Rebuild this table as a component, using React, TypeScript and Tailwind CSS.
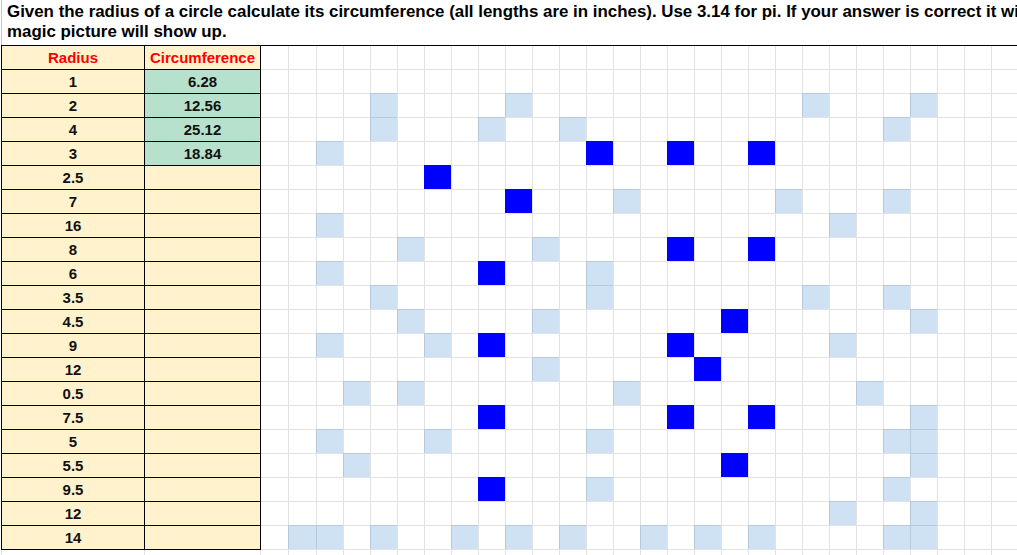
import React from "react";

const radii = ["1", "2", "4", "3", "2.5", "7", "16", "8", "6", "3.5", "4.5", "9", "12", "0.5", "7.5", "5", "5.5", "9.5", "12", "14"];
const circ = ["6.28", "12.56", "25.12", "18.84"];

const LIGHT: Record<number, number[]> = {
  2: [4, 9, 20, 24],
  3: [4, 8, 11, 23],
  4: [2],
  6: [13, 19, 23],
  7: [2, 21],
  8: [5, 10],
  9: [2, 12],
  10: [4, 12, 20, 23],
  11: [5, 10, 24],
  12: [2, 6, 21],
  13: [10],
  14: [3, 5, 13, 22],
  15: [24],
  16: [2, 6, 12, 23, 24],
  17: [3, 24],
  18: [12, 23],
  19: [21, 24],
  20: [1, 2, 4, 7, 9, 11, 14, 16, 18, 23, 24],
};

const DARK: Record<number, number[]> = {
  4: [12, 15, 18],
  5: [6],
  6: [9],
  8: [15, 18],
  9: [8],
  11: [17],
  12: [8, 15],
  13: [16],
  15: [8, 15, 18],
  17: [17],
  18: [8],
};

const COLS = Array.from({ length: 28 }, (_, i) => i);

function GridCells({ row }: { row: number }) {
  const light = LIGHT[row] || [];
  const dark = DARK[row] || [];
  return (
    <>
      {COLS.map((c) => {
        const w = c < 2 ? "w-[28px]" : "w-[27px]";
        let fill = "bg-white";
        if (dark.includes(c)) fill = "bg-[#0000ff] shadow-[-1px_-1px_0_#0000ff]";
        else if (light.includes(c)) fill = "bg-[#cfe2f3] shadow-[-1px_-1px_0_#b5c9db]";
        return <div key={c} className={`${w} h-[24px] shrink-0 border-r border-b border-[#e2e2e2] ${fill}`} />;
      })}
    </>
  );
}

export default function App() {
  return (
    <div
      className="w-[1017px] h-[555px] overflow-hidden bg-white text-black"
      style={{ fontFamily: '"Liberation Sans", Arial, sans-serif' }}
    >
      <div className="ml-[1px] h-[45px] border-l border-[#c8c8c8] pl-[5px] pt-[2px] font-bold text-[16.9px] leading-[20px] whitespace-nowrap overflow-hidden">
        <div>
          Given the radius of a circle calculate its circumference (all lengths are in inches). Use 3.14 for pi. If your answer is correct it will
        </div>
        <div>magic picture will show up.</div>
      </div>
      <div className="ml-[1px] border-t border-black w-[1100px]">
        <div className="flex h-[24px]">
          <div className="w-[144px] shrink-0 border-l border-r border-b border-black bg-[#fff2cc] text-center text-[15px] font-bold leading-[23px] text-[#ff0000]">
            Radius
          </div>
          <div className="w-[116px] shrink-0 border-r border-b border-black bg-[#fff2cc] text-center text-[15px] font-bold leading-[23px] text-[#ff0000]">
            Circumference
          </div>
          <GridCells row={0} />
        </div>
        {radii.map((r, i) => (
          <div key={i} className="flex h-[24px]">
            <div className="w-[144px] shrink-0 border-l border-r border-b border-black bg-[#fff2cc] text-center text-[15px] font-bold leading-[23px] text-[#111]">
              {r}
            </div>
            <div
              className={`w-[116px] shrink-0 border-r border-b border-black text-center text-[15px] font-bold leading-[23px] text-[#111] ${
                i < 4 ? "bg-[#b7e1cd]" : "bg-[#fff2cc]"
              }`}
            >
              {circ[i] ?? ""}
            </div>
            <GridCells row={i + 1} />
          </div>
        ))}
        <div className="flex h-[24px]">
          <div className="w-[144px] shrink-0 border-l border-r border-[#e2e2e2]" />
          <div className="w-[116px] shrink-0 border-r border-[#e2e2e2]" />
          <GridCells row={99} />
        </div>
      </div>
    </div>
  );
}
